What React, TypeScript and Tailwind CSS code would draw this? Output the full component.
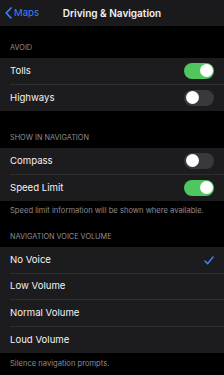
type Row = { label: string; on?: boolean; checked?: boolean };

function Toggle({ on }: { on: boolean }) {
	return (
		<div
			className={`w-[30px] h-[16px] rounded-full p-[1.5px] flex ${
				on ? "bg-[#4fc75e] justify-end" : "bg-[#39393d] justify-start"
			}`}
		>
			<div className="w-[13px] h-[13px] rounded-full bg-white" />
		</div>
	);
}

function Group({ rows, kind }: { rows: Row[]; kind: "toggle" | "check" }) {
	return (
		<div className="bg-[#1c1c1e]">
			{rows.map((row, i) => (
				<div key={row.label} className="pl-[10px]">
					<div
						className={`h-[26.5px] flex items-center justify-between pr-[10px] ${
							i < rows.length - 1 ? "border-b border-[#2e2e30]" : ""
						}`}
					>
						<span className="text-[9.6px] text-[#f2f2f7]">{row.label}</span>
						{kind === "toggle" && <Toggle on={!!row.on} />}
						{kind === "check" && row.checked && (
							<svg width="10" height="9" viewBox="0 0 10 9" fill="none">
								<path
									d="M1 5 L3.6 7.8 L9 1"
									stroke="#3a82f7"
									strokeWidth="1.5"
									strokeLinecap="round"
									strokeLinejoin="round"
								/>
							</svg>
						)}
					</div>
				</div>
			))}
		</div>
	);
}

function Header({ text, h }: { text: string; h: string }) {
	return (
		<div className={`${h} flex items-end px-[10px] pb-[4px]`}>
			<span className="text-[7.3px] text-[#8d8d93] uppercase">{text}</span>
		</div>
	);
}

export default function App() {
	return (
		<div
			className="w-[224px] h-[375px] bg-black overflow-hidden"
			style={{ fontFamily: "Inter, 'Liberation Sans', sans-serif" }}
		>
			<div className="h-[26px] bg-[#1a1a1c] relative flex items-center justify-center">
				<div className="absolute left-[5px] top-0 h-full flex items-center gap-[2px] text-[#3a82f7]">
					<svg width="7" height="12" viewBox="0 0 7 12" fill="none">
						<path
							d="M6 1 L1.2 6 L6 11"
							stroke="#3a82f7"
							strokeWidth="1.7"
							strokeLinecap="round"
							strokeLinejoin="round"
						/>
					</svg>
					<span className="text-[9.6px]">Maps</span>
				</div>
				<span className="text-[10px] font-semibold text-[#f2f2f7]">Driving &amp; Navigation</span>
			</div>

			<Header text="Avoid" h="h-[32px]" />
			<Group
				kind="toggle"
				rows={[
					{ label: "Tolls", on: true },
					{ label: "Highways", on: false },
				]}
			/>

			<Header text="Show in Navigation" h="h-[37px]" />
			<Group
				kind="toggle"
				rows={[
					{ label: "Compass", on: false },
					{ label: "Speed Limit", on: true },
				]}
			/>
			<div className="px-[10px] pt-[4px] text-[7.6px] text-[#8d8d93] whitespace-nowrap">
				Speed limit information will be shown where available.
			</div>

			<Header text="Navigation Voice Volume" h="h-[31px]" />
			<Group
				kind="check"
				rows={[
					{ label: "No Voice", checked: true },
					{ label: "Low Volume" },
					{ label: "Normal Volume" },
					{ label: "Loud Volume" },
				]}
			/>
			<div className="px-[10px] pt-[5px] text-[7.6px] text-[#8d8d93]">Silence navigation prompts.</div>
		</div>
	);
}
